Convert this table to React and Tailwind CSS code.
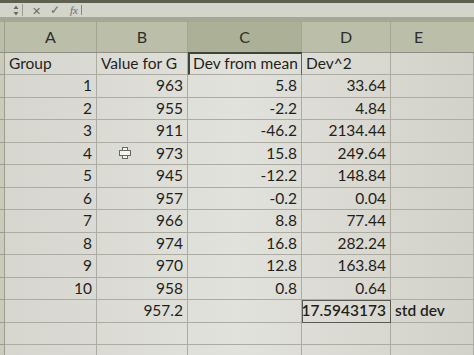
const rows = [
  ["1", "963", "5.8", "33.64"],
  ["2", "955", "-2.2", "4.84"],
  ["3", "911", "-46.2", "2134.44"],
  ["4", "973", "15.8", "249.64"],
  ["5", "945", "-12.2", "148.84"],
  ["6", "957", "-0.2", "0.04"],
  ["7", "966", "8.8", "77.44"],
  ["8", "974", "16.8", "282.24"],
  ["9", "970", "12.8", "163.84"],
  ["10", "958", "0.8", "0.64"],
];

const cols = "grid grid-cols-[5px_92px_91px_114px_89px_1fr]";
const cell = "border-r border-b border-[#acaca2] px-[4px] flex items-center truncate";

function Row({ a, b, c, d, e, eCls = "", dCls = "" }) {
  return (
    <div className={`${cols} h-[22.5px]`}>
      <div className="border-r border-b border-[#9c9c90] bg-[#c9cbbb]" />
      <div className={`${cell} justify-end`}>{a}</div>
      <div className={`${cell} justify-end`}>{b}</div>
      <div className={`${cell} justify-end`}>{c}</div>
      <div className={`${cell} justify-end ${dCls}`}>{d}</div>
      <div className={`${cell} ${eCls}`}>{e}</div>
    </div>
  );
}

export default function App() {
  return (
    <div
      className="w-[474px] h-[355px] overflow-hidden bg-[#dcdcd5] text-[#1f1f1c] relative"
      style={{ fontFamily: "Lato, 'Open Sans', sans-serif" }}
    >
      {/* formula bar */}
      <div className="h-[3px] bg-[#5e5f4e]" />
      <div className="h-[14px] bg-[#d3d4cb] flex items-center text-[#6c6c66]">
        <div className="w-[22px] flex justify-end pr-[3px]">
          <svg width="6" height="11" viewBox="0 0 6 11">
            <path d="M3 0.5 L5.5 4 H0.5 Z" fill="#6a6a62" />
            <path d="M3 10.5 L5.5 7 H0.5 Z" fill="#6a6a62" />
          </svg>
        </div>
        <div className="w-px h-[12px] bg-[#9a9a92]" />
        <span className="ml-[9px] text-[11px] leading-none">✕</span>
        <span className="ml-[9px] text-[12px] leading-none">✓</span>
        <span
          className="ml-[10px] text-[11px] italic leading-none"
          style={{ fontFamily: "'Liberation Serif', serif" }}
        >
          fx
        </span>
        <div className="ml-[3px] w-px h-[10px] bg-[#8a8a84]" />
      </div>
      <div className="h-[5px] bg-[#a7a894]" />

      {/* column letters */}
      <div className={`${cols} h-[30px] bg-[#bbbea9] text-[16px] text-[#2e2e2a]`}>
        <div className="border-r border-[#9c9c90]" />
        <div className="border-r border-[#a3a595] flex items-center justify-center">A</div>
        <div className="border-r border-[#a3a595] flex items-center justify-center">B</div>
        <div className="border-r border-[#a3a595] bg-[#acb096] flex items-center justify-center">C</div>
        <div className="border-r border-[#a3a595] flex items-center justify-center">D</div>
        <div className="flex items-center justify-center pr-[28px]">E</div>
      </div>

      {/* sheet */}
      <div className="text-[15.5px] bg-linear-to-r from-[#d6d6cf] via-[#e2e2dc] to-[#d2d2ca]">
        <div className={`${cols} h-[23px] border-t border-[#8d8f80]`}>
          <div className="border-r border-b border-[#9c9c90] bg-[#c9cbbb]" />
          <div className={cell}>Group</div>
          <div className={cell}>Value for G</div>
          <div className="border-t-2 border-l-2 border-r border-b border-t-[#3c4638] border-l-[#3c4638] border-r-[#5c6256] border-b-[#acaca2] -mt-[1px] px-[3px] flex items-center overflow-hidden whitespace-nowrap">
            Dev from mean
          </div>
          <div className={cell}>Dev^2</div>
          <div className={cell} />
        </div>
        {rows.map(([a, b, c, d]) => (
          <Row key={a} a={a} b={b} c={c} d={d} />
        ))}
        <Row
          a=""
          b="957.2"
          c=""
          d="17.5943173"
          e="std dev"
          dCls="font-semibold outline outline-[#5a5a52] -outline-offset-1"
          eCls="font-semibold"
        />
        <Row a="" b="" c="" d="" e="" />
        <Row a="" b="" c="" d="" e="" />
      </div>

      {/* excel cross cursor */}
      <div className="absolute left-[119px] top-[147px] w-[12px] h-[12px] pointer-events-none">
        <div className="absolute left-[3px] top-0 w-[6px] h-[12px] bg-[#f4f4f0] border border-[#6a6a64]" />
        <div className="absolute left-0 top-[3px] w-[12px] h-[6px] bg-[#f4f4f0] border border-[#6a6a64]" />
        <div className="absolute left-[4px] top-[4px] w-[4px] h-[4px] bg-[#f4f4f0]" />
      </div>
    </div>
  );
}
